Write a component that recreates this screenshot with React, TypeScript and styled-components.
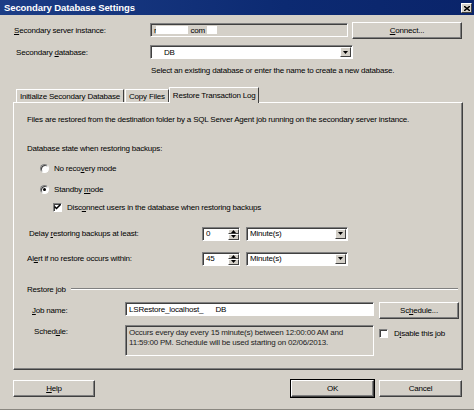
import React from 'react';
import styled, { createGlobalStyle } from 'styled-components';

const Global = createGlobalStyle`
  html, body { margin: 0; padding: 0; background: #d4d0c8; }
  body {
    font-family: "Liberation Sans", Arial, sans-serif;
    font-size: 8px;
    letter-spacing: -0.2px;
    color: #000;
  }
`;

const Dialog = styled.div`
  width: 474px;
  height: 410px;
  background: #d4d0c8;
  box-sizing: border-box;
  border-bottom: 1px solid #8a8780;
  display: flex;
  flex-direction: column;
  overflow: hidden;
`;

const TitleBar = styled.div`
  height: 15px;
  flex: none;
  background: linear-gradient(90deg, #1c3d86 0%, #0c2a72 60%, #0a246a 100%);
  display: flex;
  align-items: center;
  justify-content: space-between;
  padding: 0 2px 0 4px;
`;

const Title = styled.span`
  color: #fff;
  font-weight: bold;
  font-size: 9.5px;
  letter-spacing: -0.1px;
`;

const CloseBox = styled.span`
  width: 11px;
  height: 10px;
  background: #d4d0c8;
  border: 1px solid;
  border-color: #fff #404040 #404040 #fff;
  box-sizing: border-box;
  display: flex;
  align-items: center;
  justify-content: center;
  margin-top: 1px;
`;

const Body = styled.div`
  flex: 1;
  display: flex;
  flex-direction: column;
  padding: 5px 12px 0 13px;
`;

const TopGrid = styled.div`
  display: grid;
  grid-template-columns: 137px 1fr;
  align-items: center;
`;

const Label = styled.span<{ $indent?: number }>`
  padding-left: ${(p) => p.$indent ?? 0}px;
  white-space: nowrap;
`;

const FieldRow = styled.div<{ $h: number }>`
  display: flex;
  align-items: center;
  gap: 4px;
  height: ${(p) => p.$h}px;
`;

const Sunken = styled.div<{ $w: number; $h?: number; $bg?: string }>`
  width: ${(p) => p.$w}px;
  height: ${(p) => p.$h ?? 14}px;
  box-sizing: border-box;
  background: ${(p) => p.$bg ?? '#fff'};
  border: 1px solid;
  border-color: #808080 #fff #fff #808080;
  box-shadow: inset 1px 1px 0 #404040;
  display: flex;
  align-items: center;
  padding-left: 3px;
  flex: none;
  white-space: nowrap;
  overflow: hidden;
`;

const Redact = styled.span<{ $w: number }>`
  display: inline-block;
  width: ${(p) => p.$w}px;
  height: 8px;
  background: #fff;
`;

const Button = styled.button<{ $w: number; $default?: boolean }>`
  width: ${(p) => p.$w}px;
  height: 17px;
  flex: none;
  background: #d4d0c8;
  font-family: inherit;
  font-size: 8px;
  letter-spacing: -0.2px;
  color: #000;
  padding: 0;
  box-sizing: border-box;
  border: 1px solid;
  border-color: #fff #404040 #404040 #fff;
  box-shadow: inset -1px -1px 0 #808080;
  outline: ${(p) => (p.$default ? '1px solid #000' : 'none')};
  outline-offset: 0;
`;

const ArrowBtn = styled.span`
  margin-left: auto;
  width: 11px;
  height: 10px;
  box-sizing: border-box;
  background: #d4d0c8;
  border: 1px solid;
  border-color: #fff #404040 #404040 #fff;
  display: flex;
  align-items: center;
  justify-content: center;
  margin-right: 1px;
  flex: none;
`;

const Hint = styled.div`
  padding-left: 138px;
  height: 12px;
  display: flex;
  align-items: center;
`;

const TabStrip = styled.div`
  display: flex;
  align-items: flex-end;
  margin-top: 10px;
  padding-left: 3px;
  height: 16px;
`;

const Tab = styled.div<{ $active?: boolean }>`
  height: ${(p) => (p.$active ? 16 : 13)}px;
  box-sizing: border-box;
  padding: 0 3px;
  display: flex;
  align-items: center;
  border: 1px solid;
  border-bottom: none;
  border-color: #fff #404040 transparent #fff;
  background: #d4d0c8;
  margin-right: ${(p) => (p.$active ? 0 : 1)}px;
  margin-left: ${(p) => (p.$active ? -1 : 0)}px;
  position: relative;
  z-index: ${(p) => (p.$active ? 2 : 1)};
  margin-bottom: ${(p) => (p.$active ? -1 : 0)}px;
  white-space: nowrap;
`;

const Panel = styled.div`
  width: 450px;
  height: 268px;
  box-sizing: border-box;
  border: 1px solid;
  border-color: #fff #404040 #404040 #fff;
  box-shadow: inset -1px -1px 0 #808080;
  padding: 10px 0 0 13px;
  display: flex;
  flex-direction: column;
`;

const Line = styled.div<{ $mt?: number; $pl?: number; $h?: number }>`
  display: flex;
  align-items: center;
  height: ${(p) => p.$h ?? 12}px;
  margin-top: ${(p) => p.$mt ?? 0}px;
  padding-left: ${(p) => p.$pl ?? 0}px;
  white-space: nowrap;
  gap: 5px;
`;

const Radio = styled.span<{ $on?: boolean }>`
  width: 9px;
  height: 9px;
  border-radius: 50%;
  box-sizing: border-box;
  background: #fff;
  border: 1px solid;
  border-color: #808080 #fff #fff #808080;
  box-shadow: inset 1px 1px 0 #404040;
  display: flex;
  align-items: center;
  justify-content: center;
  &::after {
    content: '';
    width: 3px;
    height: 3px;
    border-radius: 50%;
    background: ${(p) => (p.$on ? '#000' : 'transparent')};
  }
`;

const Check = styled.span`
  width: 9px;
  height: 9px;
  box-sizing: border-box;
  background: #fff;
  border: 1px solid;
  border-color: #808080 #fff #fff #808080;
  box-shadow: inset 1px 1px 0 #404040;
  display: flex;
  align-items: center;
  justify-content: center;
  flex: none;
`;

const SettingRow = styled.div<{ $mt: number }>`
  display: grid;
  grid-template-columns: 173px 38px 6px 102px;
  align-items: center;
  height: 15px;
  margin-top: ${(p) => p.$mt}px;
  padding-left: 2px;
`;

const Spin = styled.div`
  display: flex;
  height: 14px;
  width: 38px;
  box-sizing: border-box;
  background: #fff;
  border: 1px solid;
  border-color: #808080 #fff #fff #808080;
  box-shadow: inset 1px 1px 0 #404040;
`;

const SpinText = styled.span`
  flex: 1;
  padding-left: 3px;
  display: flex;
  align-items: center;
`;

const SpinButtons = styled.div`
  width: 11px;
  display: flex;
  flex-direction: column;
  margin: 1px 0 0 0;
`;

const SpinBtn = styled.span`
  flex: 1;
  background: #d4d0c8;
  border: 1px solid;
  border-color: #fff #404040 #404040 #fff;
  box-sizing: border-box;
  display: flex;
  align-items: center;
  justify-content: center;
`;

const GroupHead = styled.div`
  display: flex;
  align-items: center;
  gap: 5px;
  margin-top: 17px;
  height: 12px;
  padding-right: 4px;
  &::after {
    content: '';
    flex: 1;
    height: 0;
    border-top: 1px solid #808080;
    border-bottom: 1px solid #fff;
  }
`;

const JobGrid = styled.div`
  display: grid;
  grid-template-columns: 93px 249px 5px 80px;
  margin-top: 7px;
  padding-left: 5px;
  row-gap: 6px;
`;

const JobLabel = styled.span<{ $top?: boolean }>`
  display: flex;
  align-items: ${(p) => (p.$top ? 'flex-start' : 'center')};
  padding-top: ${(p) => (p.$top ? 2 : 0)}px;
  padding-left: ${(p) => (p.$top ? 2 : 0)}px;
`;

const ScheduleBox = styled.div`
  height: 31px;
  box-sizing: border-box;
  border: 1px solid;
  border-color: #808080 #fff #fff #808080;
  box-shadow: inset 1px 1px 0 #404040;
  padding: 2px 3px;
  line-height: 10px;
  color: #222;
  white-space: nowrap;
`;

const DisableRow = styled.div`
  display: flex;
  align-items: flex-start;
  gap: 6px;
  padding-top: 4px;
  white-space: nowrap;
`;

const Footer = styled.div`
  display: flex;
  justify-content: space-between;
  margin-top: 10px;
`;

const FooterRight = styled.div`
  display: flex;
  gap: 5px;
`;

const DownArrow = () => (
  <svg width="5" height="3" viewBox="0 0 5 3">
    <path d="M0 0h5L2.5 3z" fill="#000" />
  </svg>
);

const UpArrow = () => (
  <svg width="5" height="3" viewBox="0 0 5 3">
    <path d="M0 3h5L2.5 0z" fill="#000" />
  </svg>
);

const Combo = ({ w, text, pad }: { w: number; text: string; pad?: number }) => (
  <Sunken $w={w}>
    <span style={{ paddingLeft: pad ?? 0 }}>{text}</span>
    <ArrowBtn>
      <DownArrow />
    </ArrowBtn>
  </Sunken>
);

const Spinner = ({ value }: { value: string }) => (
  <Spin>
    <SpinText>{value}</SpinText>
    <SpinButtons>
      <SpinBtn>
        <UpArrow />
      </SpinBtn>
      <SpinBtn>
        <DownArrow />
      </SpinBtn>
    </SpinButtons>
  </Spin>
);

export default function App() {
  return (
    <Dialog>
      <Global />
      <TitleBar>
        <Title>Secondary Database Settings</Title>
        <CloseBox>
          <svg width="6" height="5" viewBox="0 0 6 5">
            <path d="M0 0l6 5M6 0L0 5" stroke="#000" strokeWidth="1.4" />
          </svg>
        </CloseBox>
      </TitleBar>
      <Body>
        <TopGrid>
          <Label $indent={1}>
            <u>S</u>econdary server instance:
          </Label>
          <FieldRow $h={20}>
            <Sunken $w={198} $bg="#d4d0c8">
              r<Redact $w={32} />
              &nbsp;com&nbsp;
              <Redact $w={10} />
            </Sunken>
            <Button $w={110}>
              <u>C</u>onnect...
            </Button>
          </FieldRow>
          <Label $indent={3}>
            Secondary <u>d</u>atabase:
          </Label>
          <FieldRow $h={24}>
            <Combo w={203} text="DB" pad={10} />
          </FieldRow>
        </TopGrid>
        <Hint>Select an existing database or enter the name to create a new database.</Hint>
        <TabStrip>
          <Tab>Initialize Secondary Database</Tab>
          <Tab>Copy Files</Tab>
          <Tab $active>Restore Transaction Log</Tab>
        </TabStrip>
        <Panel>
          <Line>
            Files are restored from the destination folder by a SQL Server Agent job running on the secondary
            server instance.
          </Line>
          <Line $mt={17}>Database state when restoring backups:</Line>
          <Line $mt={8} $pl={13}>
            <Radio />
            <span>
              No reco<u>v</u>ery mode
            </span>
          </Line>
          <Line $mt={9} $pl={13}>
            <Radio $on />
            <span>
              Standby <u>m</u>ode
            </span>
          </Line>
          <Line $mt={6} $pl={26}>
            <Check>
              <svg width="7" height="6" viewBox="0 0 7 6">
                <path d="M0.5 2.5l2 2 4-4" stroke="#000" strokeWidth="1.5" fill="none" />
              </svg>
            </Check>
            <span>
              Disc<u>o</u>nnect users in the database when restoring backups
            </span>
          </Line>
          <SettingRow $mt={13}>
            <span>
              Delay <u>r</u>estoring backups at least:
            </span>
            <Spinner value="0" />
            <span />
            <Combo w={102} text="Minute(s)" />
          </SettingRow>
          <SettingRow $mt={10}>
            <span style={{ marginLeft: -2 }}>
              Al<u>e</u>rt if no restore occurs within:
            </span>
            <Spinner value="45" />
            <span />
            <Combo w={102} text="Minute(s)" />
          </SettingRow>
          <GroupHead>Restore job</GroupHead>
          <JobGrid>
            <JobLabel>
              <span>
                <u>J</u>ob name:
              </span>
            </JobLabel>
            <Sunken $w={249}>LSRestore_localhost_&nbsp;&nbsp;&nbsp;&nbsp;&nbsp;&nbsp;DB</Sunken>
            <span />
            <Button $w={80}>
              Sc<u>h</u>edule...
            </Button>
            <JobLabel $top>
              <span>
                Sched<u>u</u>le:
              </span>
            </JobLabel>
            <ScheduleBox>
              Occurs every day every 15 minute(s) between 12:00:00 AM and
              <br />
              11:59:00 PM. Schedule will be used starting on 02/06/2013.
            </ScheduleBox>
            <span />
            <DisableRow>
              <Check />
              <span>
                D<u>i</u>sable this job
              </span>
            </DisableRow>
          </JobGrid>
        </Panel>
        <Footer>
          <Button $w={82}>
            <u>H</u>elp
          </Button>
          <FooterRight>
            <Button $w={83} $default>
              OK
            </Button>
            <Button $w={83}>Cancel</Button>
          </FooterRight>
        </Footer>
      </Body>
    </Dialog>
  );
}
